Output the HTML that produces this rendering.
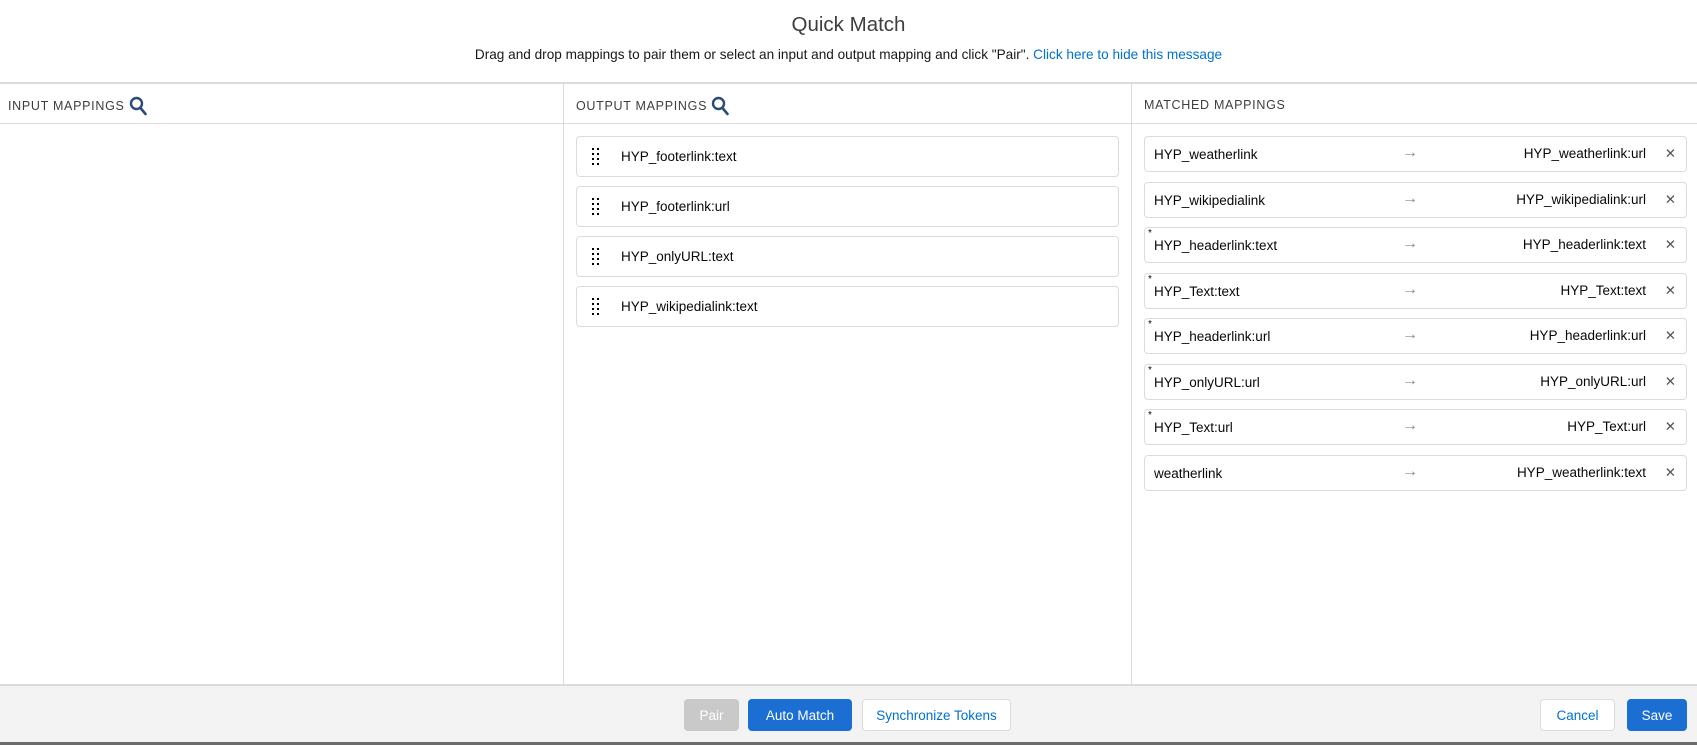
<!DOCTYPE html>
<html><head><style>
*{box-sizing:border-box;margin:0;padding:0}
body{width:1697px;height:745px;overflow:hidden;background:#fff;font-family:"Liberation Sans",sans-serif;color:#080707;position:relative}
.abs{position:absolute}
.title{top:13px;width:100%;text-align:center;font-size:20.5px;font-weight:300;color:#3e3e3c}
.sub{top:47px;width:100%;text-align:center;font-size:13.6px;color:#181818}
.sub a{color:#0070d2;text-decoration:none}
.hl{left:0;width:1697px;height:2px;background:#dddbda}
.vl{width:1px;background:#dddbda;top:83px;height:602px}
.hd{top:96px;font-size:12.5px;letter-spacing:0.7px;color:#3e3e3c;display:flex;align-items:center;gap:4px}
.card{border:1px solid #dddbda;border-radius:4px;background:#fff;font-size:13.5px;display:flex;align-items:center}
.oc{left:576px;width:543px;height:41px}
.oc .d{width:8px;margin-left:15px;margin-right:21px;display:grid;grid-template-columns:3px 3px;gap:3px 2px}
.oc .d i{width:2px;height:2px;background:#000;display:block}
.mc{left:1144px;width:543px;height:36px;padding-left:9px;position:absolute}
.mc .l{flex:1}
.mc .ar{position:absolute;left:257px;top:7px;color:#8a8886;font-size:16px}
.mc .r{position:absolute;right:40px;top:9px}
.mc .x{position:absolute;right:10px;top:9px;color:#555}
.mc .st{position:absolute;left:3px;top:0;font-size:10px}
.foot{left:0;top:686px;width:1697px;height:56px;background:#f3f3f3}
.btn{top:699px;height:32px;border-radius:4px;font-size:13.5px;display:flex;align-items:center;justify-content:center;border:1px solid #dddbda;background:#fff;color:#0070d2}
.blue{background:#1b6fd2;border-color:#1b6fd2;color:#fff}
</style></head><body>
<div class="abs title">Quick Match</div>
<div class="abs sub">Drag and drop mappings to pair them or select an input and output mapping and click "Pair". <a>Click here to hide this message</a></div>
<div class="abs hl" style="top:82px"></div>
<div class="abs hl" style="top:123px;height:1px"></div>
<div class="abs vl" style="left:563px"></div>
<div class="abs vl" style="left:1131px"></div>
<div class="abs hd" style="left:8px">INPUT MAPPINGS <svg width="18" height="20" viewBox="0 0 18 20"><circle cx="7.5" cy="7.5" r="5.5" fill="none" stroke="#2c4a7a" stroke-width="2.4"/><path d="M11.5 12l5 6" stroke="#2c4a7a" stroke-width="2.6" stroke-linecap="round"/></svg></div>
<div class="abs hd" style="left:576px">OUTPUT MAPPINGS <svg width="18" height="20" viewBox="0 0 18 20"><circle cx="7.5" cy="7.5" r="5.5" fill="none" stroke="#2c4a7a" stroke-width="2.4"/><path d="M11.5 12l5 6" stroke="#2c4a7a" stroke-width="2.6" stroke-linecap="round"/></svg></div>
<div class="abs hd" style="left:1144px;top:98px">MATCHED MAPPINGS</div>

<div class="abs card oc" style="top:136px"><span class="d"><i></i><i></i><i></i><i></i><i></i><i></i><i></i><i></i></span>HYP_footerlink:text</div>
<div class="abs card oc" style="top:186px"><span class="d"><i></i><i></i><i></i><i></i><i></i><i></i><i></i><i></i></span>HYP_footerlink:url</div>
<div class="abs card oc" style="top:236px"><span class="d"><i></i><i></i><i></i><i></i><i></i><i></i><i></i><i></i></span>HYP_onlyURL:text</div>
<div class="abs card oc" style="top:286px"><span class="d"><i></i><i></i><i></i><i></i><i></i><i></i><i></i><i></i></span>HYP_wikipedialink:text</div>

<div class="card mc" style="top:136px"><span class="l">HYP_weatherlink</span><span class="ar">→</span><span class="r">HYP_weatherlink:url</span><span class="x">✕</span></div>
<div class="card mc" style="top:182px"><span class="l">HYP_wikipedialink</span><span class="ar">→</span><span class="r">HYP_wikipedialink:url</span><span class="x">✕</span></div>
<div class="card mc" style="top:227px"><span class="st">*</span><span class="l">HYP_headerlink:text</span><span class="ar">→</span><span class="r">HYP_headerlink:text</span><span class="x">✕</span></div>
<div class="card mc" style="top:273px"><span class="st">*</span><span class="l">HYP_Text:text</span><span class="ar">→</span><span class="r">HYP_Text:text</span><span class="x">✕</span></div>
<div class="card mc" style="top:318px"><span class="st">*</span><span class="l">HYP_headerlink:url</span><span class="ar">→</span><span class="r">HYP_headerlink:url</span><span class="x">✕</span></div>
<div class="card mc" style="top:364px"><span class="st">*</span><span class="l">HYP_onlyURL:url</span><span class="ar">→</span><span class="r">HYP_onlyURL:url</span><span class="x">✕</span></div>
<div class="card mc" style="top:409px"><span class="st">*</span><span class="l">HYP_Text:url</span><span class="ar">→</span><span class="r">HYP_Text:url</span><span class="x">✕</span></div>
<div class="card mc" style="top:455px"><span class="l">weatherlink</span><span class="ar">→</span><span class="r">HYP_weatherlink:text</span><span class="x">✕</span></div>

<div class="abs foot"></div>
<div class="abs hl" style="top:684px"></div>
<div class="abs" style="left:0;top:742px;width:1697px;height:3px;background:#6b6b6b"></div>
<div class="abs btn" style="left:684px;width:55px;background:#c9c9c9;border-color:#c9c9c9;color:#fff">Pair</div>
<div class="abs btn blue" style="left:748px;width:104px">Auto Match</div>
<div class="abs btn" style="left:862px;width:149px">Synchronize Tokens</div>
<div class="abs btn" style="left:1540px;width:75px">Cancel</div>
<div class="abs btn blue" style="left:1627px;width:60px">Save</div>
</body></html>
